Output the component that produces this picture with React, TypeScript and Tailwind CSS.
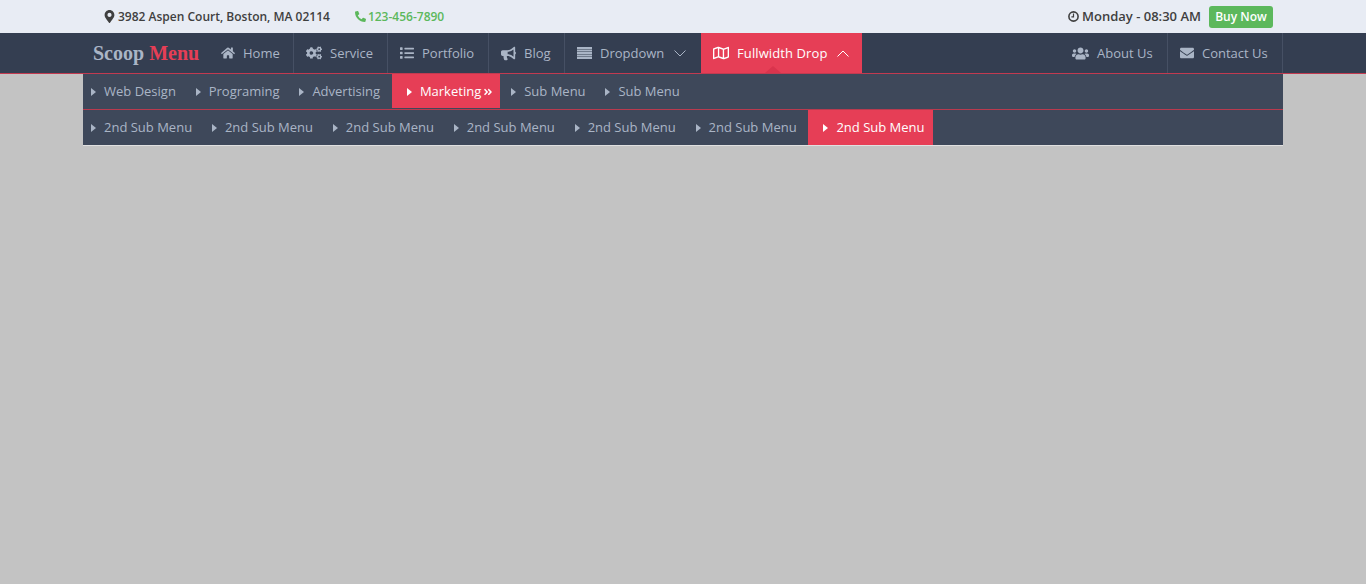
import type { ReactNode } from 'react';
import {
  FaAngleDoubleRight,
  FaBullhorn,
  FaCogs,
  FaEnvelope,
  FaHome,
  FaList,
  FaMapMarkerAlt,
  FaPhoneAlt,
  FaRegMap,
  FaUsers,
} from 'react-icons/fa';

const firstLevel = ['Web Design', 'Programing', 'Advertising', 'Marketing', 'Sub Menu', 'Sub Menu'];
const secondLevel = Array.from({ length: 7 }, () => '2nd Sub Menu');

const Caret = () => (
  <svg width="5" height="8" viewBox="0 0 5 8" className="mr-[8px] shrink-0 fill-current">
    <path d="M0 0 L5 4 L0 8 Z" />
  </svg>
);

const ListIcon = () => (
  <svg width="15" height="12" viewBox="0 0 15 12" className="fill-current">
    <path d="M0 0h15v2H0zM0 2.5h15v2H0zM0 5h15v2H0zM0 7.5h15v2H0zM0 10h15v2H0z" />
  </svg>
);

const Clock = () => (
  <svg width="11" height="11" viewBox="0 0 11 11" className="mr-[3px] fill-none stroke-current" strokeWidth="1.6">
    <circle cx="5.5" cy="5.5" r="4.6" />
    <path d="M5.5 2.6V5.8H3.4" strokeWidth="1.2" />
  </svg>
);

const Chevron = ({ up }: { up?: boolean }) => (
  <svg width="12" height="7" viewBox="0 0 12 7" className="ml-[2px] fill-none stroke-current" strokeWidth="1">
    <path d={up ? 'M0.5 6.5 L6 1 L11.5 6.5' : 'M0.5 0.5 L6 6 L11.5 0.5'} />
  </svg>
);

const NavItem = ({ icon, label, width }: { icon: ReactNode; label: string; width: string }) => (
  <a className={`flex h-10 items-center gap-2 border-r border-[#465064] pl-3 ${width}`}>
    <span className="flex justify-center text-[#aab5c6]">{icon}</span>
    <span className="pt-[1px]">{label}</span>
  </a>
);

const SubItem = ({ label, active, more, afterActive }: { label: string; active?: boolean; more?: boolean; afterActive?: boolean }) => (
  <a
    className={`flex h-full items-center pt-[1px] ${
      active
        ? `bg-[#e63e56] pl-[15px] text-white ${more ? 'pr-[7px]' : 'pr-2'}`
        : afterActive
          ? 'pl-[11px] pr-[11.8px]'
          : 'pl-2 pr-[11.8px]'
    }`}
  >
    <Caret />
    <span>{label}</span>
    {more && <FaAngleDoubleRight className="ml-[2px] text-[10px]" />}
  </a>
);

export default function App() {
  return (
    <div className="min-h-[584px] bg-[#c3c3c3] font-['Open_Sans',sans-serif]">
      <div className="h-[33px] bg-[#e8ecf4]">
        <div className="mx-auto flex h-full w-[1200px] items-center justify-between pl-5 pr-[10px] text-[12px] font-semibold text-[#3f3f3f]">
          <div className="flex items-center">
            <FaMapMarkerAlt className="mr-[2px] text-[13px]" />
            <span>3982 Aspen Court, Boston, MA 02114</span>
            <FaPhoneAlt className="ml-[25px] mr-[2px] text-[11px] text-[#5cb85c]" />
            <span className="text-[#5cb85c]">123-456-7890</span>
          </div>
          <div className="flex items-center">
            <Clock />
            <span className="text-[13px]">Monday - 08:30 AM</span>
            <span className="ml-2 flex h-[22px] w-[64px] items-center justify-center rounded-[3px] bg-[#5cb85c] text-[12px] font-semibold text-white">
              Buy Now
            </span>
          </div>
        </div>
      </div>

      <nav className="h-[41px] border-b border-[#c23a50] bg-[#343e51]">
        <div className="mx-auto flex h-10 w-[1200px] items-center justify-between text-[13px] text-[#aab5c6]">
          <div className="flex h-full items-center">
            <span className="w-[126px] pl-[10px] font-['Liberation_Serif',serif] text-[20px] font-bold">
              Scoop <span className="text-[#e63e56]">Menu</span>
            </span>
            <NavItem icon={<FaHome className="text-[14px]" />} label="Home" width="w-[85px]" />
            <NavItem icon={<FaCogs className="text-[16px]" />} label="Service" width="w-[94px]" />
            <NavItem icon={<FaList className="text-[14px]" />} label="Portfolio" width="w-[101px]" />
            <NavItem icon={<FaBullhorn className="text-[15px]" />} label="Blog" width="w-[76px]" />
            <a className="flex h-10 w-[136px] items-center gap-2 pl-3">
              <ListIcon />
              <span className="pt-[1px]">Dropdown</span>
              <Chevron />
            </a>
            <a className="relative flex h-10 w-[161px] items-center gap-2 bg-[#e63e56] pl-3 text-white">
              <FaRegMap className="text-[16px]" />
              <span className="pt-[1px] tracking-[0.1px]">Fullwidth Drop</span>
              <Chevron up />
              <span className="absolute bottom-0 left-[64px] h-0 w-0 border-x-[8px] border-b-[7px] border-x-transparent border-b-[#d9344d]" />
            </a>
          </div>
          <div className="flex h-full items-center">
            <NavItem icon={<FaUsers className="text-[17px]" />} label="About Us" width="w-[108px]" />
            <NavItem icon={<FaEnvelope className="text-[14px]" />} label="Contact Us" width="w-[115px]" />
          </div>
        </div>
      </nav>

      <div className="mx-auto w-[1200px] border-b border-[#e0e0e0] bg-[#3e485a] text-[13px] text-[#aab5c6]">
        <div className="flex h-[36px] items-start border-b border-[#b93a4e]">
          <div className="flex h-[34px] w-full items-center">
            {firstLevel.map((label, i) => (
              <SubItem key={i} label={label} active={i === 3} more={i === 3} afterActive={i === 4} />
            ))}
          </div>
        </div>
        <div className="flex h-[35px] items-center">
          {secondLevel.map((label, i) => (
            <SubItem key={i} label={label} active={i === 6} />
          ))}
        </div>
      </div>
    </div>
  );
}
